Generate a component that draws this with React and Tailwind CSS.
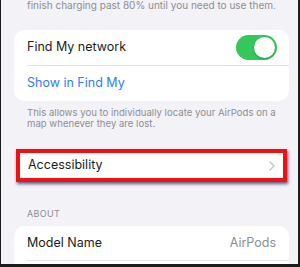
import React from 'react';

const Toggle = () => (
    <div className="w-[41px] h-[25px] rounded-full bg-[#34c759] p-[2px] flex justify-end">
        <div className="w-[21px] h-[21px] rounded-full bg-white shadow-[0_1px_2px_rgba(0,0,0,0.25)]" />
    </div>
);

const Chevron = () => (
    <svg width="6" height="10" viewBox="0 0 6 10" fill="none">
        <path d="M1 1l4 4-4 4" stroke="#c4c4c7" strokeWidth="1.4" strokeLinecap="round" strokeLinejoin="round" />
    </svg>
);

const App = () => {
    return (
        <div className="w-[300px] h-[267px] overflow-hidden bg-[#f2f2f7] border-l border-r-2 border-b-[3px] border-[#1c1c1c] font-['Inter','Liberation_Sans',sans-serif] text-[#1c1c1e]">
            <p className="-mt-px pl-[26px] text-[10px] leading-[12px] text-[#8e8e93]">
                finish charging past 80% until you need to use them.
            </p>

            <div className="mt-[19px] ml-[13px] w-[275px] bg-white rounded-[10px]">
                <div className="h-[35px] flex items-center justify-between pl-[13px] pr-[12px]">
                    <span className="text-[12.5px]">Find My network</span>
                    <Toggle />
                </div>
                <div className="ml-[13px] h-px bg-[#e3e3e6]" />
                <div className="h-[35px] flex items-center pl-[13px]">
                    <span className="text-[12.5px] text-[#2f7cf6]">Show in Find My</span>
                </div>
            </div>

            <p className="mt-[6px] pl-[26px] pr-[20px] text-[9.6px] leading-[11px] text-[#8e8e93]">
                This allows you to individually locate your AirPods on a map whenever they are lost.
            </p>

            <div className="mt-[20px] ml-[15px] w-[271px] h-[33px] bg-white border-4 border-[#ee1111] shadow-[1px_2px_3px_rgba(40,20,90,0.7)] flex items-center justify-between pl-[8px] pr-[8px]">
                <span className="text-[12.5px]">Accessibility</span>
                <Chevron />
            </div>

            <p className="mt-[26px] pl-[26px] text-[9px] leading-[11px] tracking-[0.3px] text-[#8e8e93]">ABOUT</p>

            <div className="mt-[7px] ml-[13px] w-[275px] bg-white rounded-[10px]">
                <div className="h-[34px] flex items-center justify-between pl-[13px] pr-[13px]">
                    <span className="text-[12.5px]">Model Name</span>
                    <span className="text-[12.5px] text-[#8e8e93]">AirPods</span>
                </div>
                <div className="ml-[13px] h-px bg-[#e3e3e6]" />
                <div className="h-[30px]" />
            </div>
        </div>
    );
};

export default App;
